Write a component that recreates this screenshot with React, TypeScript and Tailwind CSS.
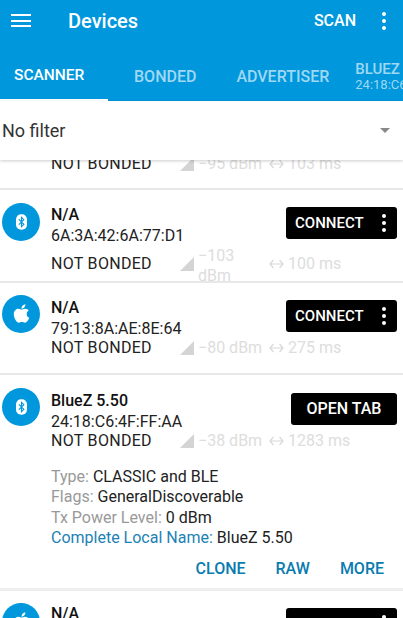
import { FaApple } from "react-icons/fa";

function BluetoothIcon() {
  return (
    <svg viewBox="0 0 14 20" className="w-[11px] h-[16px]">
      <rect x="0" y="0" width="14" height="20" rx="6.5" fill="#fff" />
      <path d="M3.6 6.6 L10 13 L7 16 L7 4 L10 7 L3.6 13.4" fill="none" stroke="#0097dc" strokeWidth="1.4" />
    </svg>
  );
}

function DeviceIcon({ kind }: { kind: "bt" | "apple" }) {
  return (
    <div className="w-[38px] h-[38px] rounded-full bg-[#0097dc] flex items-center justify-center shrink-0">
      {kind === "bt" ? <BluetoothIcon /> : <FaApple className="text-white w-[21px] h-[21px] mb-[2px]" />}
    </div>
  );
}

function Dots({ className }: { className: string }) {
  return (
    <div className={`flex flex-col items-center gap-[3px] ${className}`}>
      <span className="w-[4px] h-[4px] rounded-full bg-current" />
      <span className="w-[4px] h-[4px] rounded-full bg-current" />
      <span className="w-[4px] h-[4px] rounded-full bg-current" />
    </div>
  );
}

function Stats({ rssi, interval, wrap }: { rssi: string; interval: string; wrap?: boolean }) {
  return (
    <div className="flex items-center text-[16px] leading-[18px] h-[18px]">
      <span className="w-[101px] text-[#222] whitespace-nowrap tracking-[0.3px] shrink-0">NOT BONDED</span>
      <svg viewBox="0 0 14 14" className="w-[14px] h-[14px] ml-[28px] mr-[4px] shrink-0">
        <path d="M14 0 V14 H0 Z" fill="#d4d4d4" />
      </svg>
      <span className="w-[71px] shrink-0 text-[#dddddd]">
        {wrap ? <span className="block w-[40px] leading-[20px] mt-[3px]">{rssi}</span> : <span className="whitespace-nowrap">{rssi}</span>}
      </span>
      <svg viewBox="0 0 15 10" className="w-[15px] h-[10px] mr-[4px] shrink-0">
        <path d="M4.5 1 L1 5 L4.5 9 M1 5 H14 M10.5 1 L14 5 L10.5 9" fill="none" stroke="#d8d8d8" strokeWidth="1.2" />
      </svg>
      <span className="text-[#dddddd] whitespace-nowrap">{interval}</span>
    </div>
  );
}

function ConnectButton() {
  return (
    <div className="w-[111px] h-[32px] bg-black rounded-[3px] flex items-center text-white text-[15px] font-medium pl-[9px] shrink-0">
      <span>CONNECT</span>
      <Dots className="ml-auto mr-[11px]" />
    </div>
  );
}

export default function App() {
  return (
    <div className="w-[403px] h-[618px] overflow-hidden bg-white flex flex-col font-['Roboto',sans-serif]">
      <header className="bg-[#0097dc] h-[101px] shrink-0 flex flex-col">
        <div className="h-[41px] flex items-center text-white">
          <div className="ml-[11px] w-[20px] flex flex-col gap-[3.5px] shrink-0">
            <span className="h-[2px] bg-white" />
            <span className="h-[2px] bg-white" />
            <span className="h-[2px] bg-white" />
          </div>
          <span className="ml-[37px] text-[20px] font-medium">Devices</span>
          <span className="ml-auto text-[16px] font-medium">SCAN</span>
          <Dots className="ml-[26px] mr-[17px]" />
        </div>
        <div className="flex-1 flex items-stretch text-[16px] font-medium text-[#9fd8f3] whitespace-nowrap overflow-hidden">
          <div className="w-[108px] shrink-0 flex items-center pl-[14px] text-white border-b-2 border-white pt-[11px] text-[15.5px]">SCANNER</div>
          <div className="ml-[26px] shrink-0 flex items-center pt-[12px]">BONDED</div>
          <div className="ml-[40px] shrink-0 flex items-center pt-[12px]">ADVERTISER</div>
          <div className="ml-[26px] shrink-0 flex flex-col justify-center leading-[15px] pt-[12px]">
            <span className="text-[15px]">BLUEZ 5.50</span>
            <span className="text-[13px] font-normal">24:18:C6:4F:FF:AA</span>
          </div>
        </div>
      </header>

      <div className="h-[59px] shrink-0 flex items-center pl-[2px] pr-[13px] text-[18px] text-[#333] shadow-[0_1px_3px_rgba(0,0,0,0.2)] relative z-10">
        <span>No filter</span>
        <span className="ml-auto w-0 h-0 border-x-[5px] border-x-transparent border-t-[5px] border-t-[#888]" />
      </div>

      <div className="h-[30px] shrink-0 pl-[51px] border-b-2 border-[#e8e8e8] overflow-hidden">
        <div className="-mt-[5px]">
          <Stats rssi="−95 dBm" interval="103 ms" />
        </div>
      </div>

      <section className="h-[93px] shrink-0 flex border-b-2 border-[#e8e8e8] pl-[2px] pr-[6px] pt-[13px] relative">
        <DeviceIcon kind="bt" />
        <div className="ml-[11px] flex-1 min-w-0 pt-[1px]">
          <div className="text-[16px] leading-[21px] font-medium text-[#111]">N/A</div>
          <div className="text-[16px] leading-[21px] text-[#222]">6A:3A:42:6A:77:D1</div>
          <div className="mt-[9px]">
            <Stats rssi="−103 dBm" interval="100 ms" wrap />
          </div>
        </div>
        <div className="absolute right-[6px] top-[17px]">
          <ConnectButton />
        </div>
      </section>

      <section className="h-[92px] shrink-0 flex border-b-2 border-[#e8e8e8] pl-[2px] pr-[6px] pt-[12px] relative">
        <DeviceIcon kind="apple" />
        <div className="ml-[11px] flex-1 min-w-0 pt-[2px]">
          <div className="text-[16px] leading-[21px] font-medium text-[#111]">N/A</div>
          <div className="text-[16px] leading-[21px] text-[#222]">79:13:8A:AE:8E:64</div>
          <Stats rssi="−80 dBm" interval="275 ms" />
        </div>
        <div className="absolute right-[6px] top-[17px]">
          <ConnectButton />
        </div>
      </section>

      <section className="h-[216px] shrink-0 border-b-[3px] border-[#eeeeee] pl-[2px] pr-[6px] pt-[13px] relative">
        <div className="flex">
          <DeviceIcon kind="bt" />
          <div className="ml-[11px] flex-1 min-w-0 pt-[2px]">
            <div className="text-[16px] leading-[21px] font-medium text-[#111]">BlueZ 5.50</div>
            <div className="text-[16px] leading-[21px] text-[#222]">24:18:C6:4F:FF:AA</div>
            <Stats rssi="−38 dBm" interval="1283 ms" />
          </div>
        </div>
        <div className="absolute right-[6px] top-[18px] w-[106px] h-[32px] bg-black rounded-[3px] flex items-center justify-center text-white text-[16px] font-medium">
          OPEN TAB
        </div>
        <div className="ml-[49px] mt-[17px] text-[16px] leading-[20.4px] text-[#222]">
          <div><span className="text-[#999]">Type: </span>CLASSIC and BLE</div>
          <div><span className="text-[#999]">Flags: </span>GeneralDiscoverable</div>
          <div><span className="text-[#999]">Tx Power Level: </span>0 dBm</div>
          <div><span className="text-[#1c82b4]">Complete Local Name: </span>BlueZ 5.50</div>
        </div>
        <div className="flex justify-end gap-[30px] pr-[13px] mt-[10px] text-[16px] leading-[20px] font-medium text-[#0a7cb0]">
          <span>CLONE</span>
          <span>RAW</span>
          <span>MORE</span>
        </div>
      </section>

      <section className="flex-1 flex pl-[2px] pr-[6px] pt-[12px] relative">
        <DeviceIcon kind="apple" />
        <div className="ml-[11px] text-[16px] leading-[21px] font-medium text-[#111]">N/A</div>
        <div className="absolute right-[6px] top-[17px]">
          <ConnectButton />
        </div>
      </section>
    </div>
  );
}
